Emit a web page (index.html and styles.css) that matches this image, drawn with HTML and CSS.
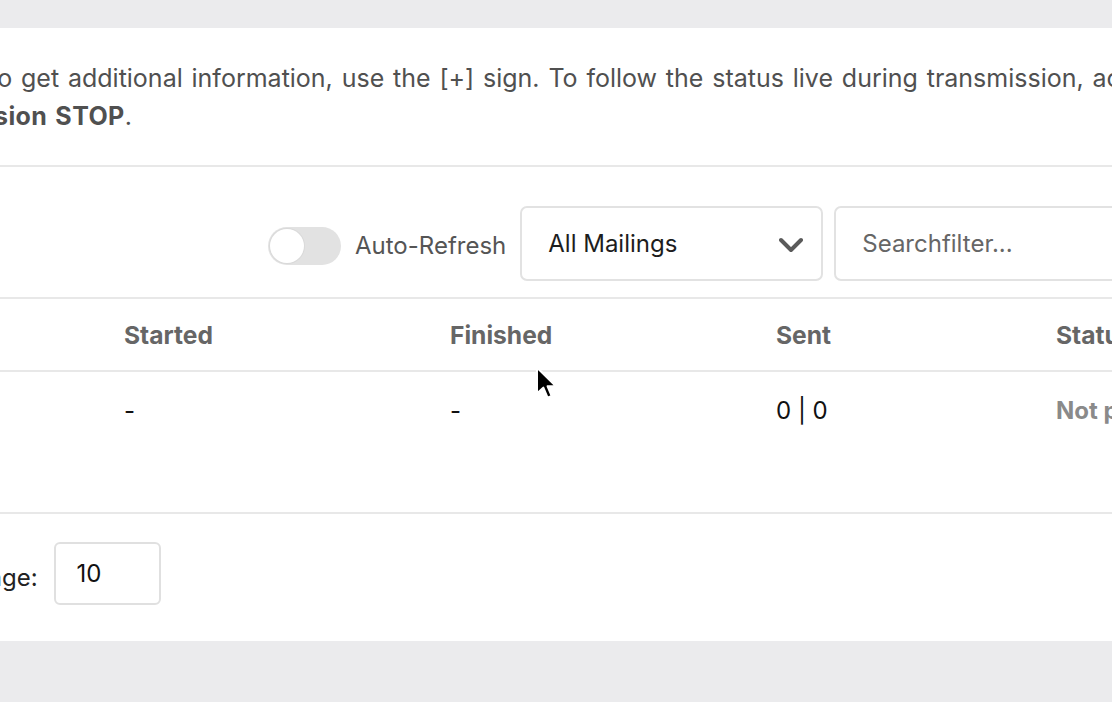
FILE: index.html
```html
<!DOCTYPE html>
<html lang="en">
<head>
<meta charset="utf-8">
<title>Mailings</title>
<link rel="stylesheet" href="styles.css">
</head>
<body>
<div class="page">
  <div class="card">
    <div class="intro">
      <p class="intro-text"><span class="line1">To get additional information, use the [+] sign. To follow the status live during transmission, activate Auto-Refresh.</span><br><span class="line2"><b>Transmission STOP</b>.</span></p>
    </div>
    <div class="toolbar">
      <div class="toggle"><span class="knob"></span></div>
      <span class="toggle-label">Auto-Refresh</span>
      <div class="select">
        <span class="select-value">All Mailings</span>
        <svg class="chevron" width="24" height="16" viewBox="0 0 24 16"><polyline points="2,3 12,13 22,3" fill="none" stroke="#5a5a5a" stroke-width="4" stroke-linecap="round" stroke-linejoin="round"/></svg>
      </div>
      <div class="search"><span class="placeholder">Searchfilter...</span></div>
    </div>
    <div class="table">
      <div class="row head">
        <span class="cell">Mailing</span>
        <span class="cell">Started</span>
        <span class="cell">Finished</span>
        <span class="cell">Sent</span>
        <span class="cell">Status</span>
      </div>
      <div class="row body">
        <span class="cell">Newsletter</span>
        <span class="cell">-</span>
        <span class="cell">-</span>
        <span class="cell">0 | 0</span>
        <span class="cell status">Not prepared</span>
      </div>
    </div>
    <div class="footer">
      <span class="footer-label">Entries per page:</span>
      <div class="perpage">10</div>
    </div>
  </div>
  <svg class="cursor" width="24" height="36" viewBox="0 0 22 34"><path d="M1.5 1.5 L1.5 26 L7.5 20.5 L11.5 30 L15.5 28.3 L11.6 19.2 L19.5 19.2 Z" fill="#000" stroke="#fff" stroke-width="2" stroke-linejoin="round"/></svg>
</div>
</body>
</html>
```
FILE: styles.css
```css
html, body {
  margin: 0;
  padding: 0;
  height: 100%;
  overflow: hidden;
  background: #ebebed;
}
body {
  font-family: Inter, "Noto Sans", "Liberation Sans", sans-serif;
  font-size: 24px;
  color: #4e4e4e;
}
.page {
  position: relative;
  height: 702px;
  padding-top: 28px;
  box-sizing: border-box;
}
.card {
  background: #fff;
  height: 613px;
  margin-left: -300px;
  margin-right: -400px;
  display: flex;
  flex-direction: column;
}
.intro {
  padding: 31px 0 30px 0;
  border-bottom: 2px solid #e8e8e8;
}
.intro-text {
  margin: 0 0 0 178px;
  font-size: 25px;
  line-height: 38px;
  white-space: nowrap;
  word-spacing: 1.8px;
  text-indent: 105px;
  color: #505050;
}
.intro-text b {
  font-weight: 700;
  letter-spacing: 0.4px;
}
.toolbar {
  display: flex;
  align-items: center;
  padding: 39px 0 16px 568px;
  border-bottom: 2px solid #e8e8e8;
}
.toggle {
  width: 73px;
  height: 38px;
  border-radius: 19px;
  background: #e2e2e2;
  display: flex;
  align-items: center;
  padding-left: 2px;
  box-sizing: border-box;
  margin-top: 4px;
}
.knob {
  width: 34px;
  height: 34px;
  border-radius: 50%;
  background: #fff;
  box-shadow: 0 0 0 1px #d9d9d9;
}
.toggle-label {
  margin-left: 14px;
  margin-right: 14px;
  color: #555;
  margin-top: 4px;
}
.select {
  width: 303px;
  height: 75px;
  box-sizing: border-box;
  border: 2px solid #e2e2e2;
  border-radius: 7px;
  display: flex;
  align-items: center;
  justify-content: space-between;
  padding: 0 18px 0 26px;
  margin-right: 11px;
}
.select-value {
  color: #1d1d1d;
}
.chevron {
  margin-top: 2px;
}
.search {
  width: 420px;
  height: 75px;
  box-sizing: border-box;
  border: 2px solid #e2e2e2;
  border-radius: 7px;
  display: flex;
  align-items: center;
  padding-left: 26px;
}
.placeholder {
  color: #666;
}
.table {
  display: flex;
  flex-direction: column;
}
.row {
  display: grid;
  grid-template-columns: 424px 326px 326px 280px 1fr;
}
.row.head {
  height: 71px;
  line-height: 73px;
  border-bottom: 2px solid #e8e8e8;
  font-weight: 700;
  font-size: 24.6px;
  color: #666;
}
.row.body {
  height: 74px;
  line-height: 78px;
  padding-bottom: 66px;
  border-bottom: 2px solid #e8e8e8;
  color: #111;
}
.cell.status {
  font-weight: 700;
  color: #8a8a8a;
}
.footer {
  display: flex;
  align-items: center;
  padding: 28px 0 0 0;
  margin-left: 144px;
}
.footer-label {
  color: #222;
  margin-top: 7px;
  margin-right: 16px;
}
.perpage {
  width: 107px;
  height: 63px;
  box-sizing: border-box;
  border: 2px solid #e0e0e0;
  border-radius: 6px;
  display: flex;
  align-items: center;
  padding-left: 21px;
  color: #111;
}
.cursor {
  position: absolute;
  left: 535px;
  top: 366px;
}
```
